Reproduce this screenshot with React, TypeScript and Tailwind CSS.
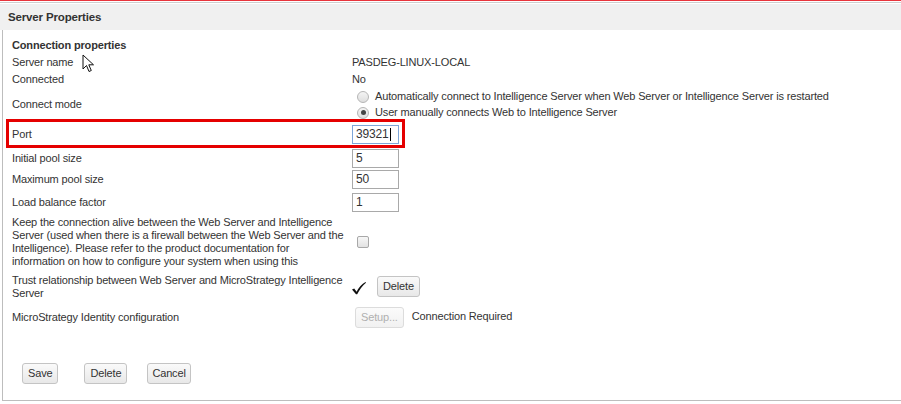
import React from "react";

const font = { fontFamily: '"Liberation Sans", Arial, sans-serif' };

function Btn(props: { label: string; disabled?: boolean; className?: string }) {
    return (
        <button
            className={
                "h-[21px] rounded-[3px] border text-[11px] leading-none bg-gradient-to-b " +
                (props.disabled ? "border-[#dcdcdc] text-[#b0b0b0] from-[#fbfbfb] to-[#f1f1f1]" : "border-[#c4c4c4] text-[#333] from-[#fafafa] to-[#e8e8e8]") +
                " " + (props.className ?? "px-[5px]")
            }
        >
            {props.label}
        </button>
    );
}

function TextInput(props: { value: string; focused?: boolean }) {
    return (
        <div
            className={
                "w-[47px] h-[19px] border bg-white flex items-center px-[3px] text-[12px] text-[#333] " +
                (props.focused ? "border-[#7ea6d8]" : "border-[#a9a9a9]")
            }
        >
            {props.value}
            {props.focused && <span className="w-px h-[13px] bg-black ml-px" />}
        </div>
    );
}

function Radio(props: { checked?: boolean }) {
    return (
        <span className="w-[12px] h-[12px] rounded-full border border-[#b5b5b5] bg-gradient-to-b from-[#f4f4f4] to-[#dedede] flex items-center justify-center shrink-0">
            {props.checked && <span className="w-[5px] h-[5px] rounded-full bg-[#444]" />}
        </span>
    );
}

function Row(props: { label: React.ReactNode; h: string; children?: React.ReactNode }) {
    return (
        <div className={"flex items-center " + props.h}>
            <div className="w-[340px] shrink-0">{props.label}</div>
            <div className="flex items-center">{props.children}</div>
        </div>
    );
}

export default function App() {
    return (
        <div
            className="w-[901px] h-[404px] bg-white text-[11px] leading-[13px] tracking-[-0.15px] text-[#333] relative overflow-hidden"
            style={font}
        >
            <div className="h-px bg-[#e8343c]" />
            <div className="h-px bg-white" />
            <div className="h-px bg-[#cfcfcf]" />
            <div className="h-px bg-white" />
            <div className="h-[26px] bg-[#f0f0f0] flex items-center pl-[8px] pt-px font-bold text-[11.5px]">
                Server Properties
            </div>
            <div className="ml-[2px] h-[371px] border-l border-b border-[#bdbdbd] pl-[9px] pt-[6px]">
                <div className="h-[18px] flex items-center font-bold">Connection properties</div>
                <Row label="Server name" h="h-[17px]">PASDEG-LINUX-LOCAL</Row>
                <Row label="Connected" h="h-[17px]">No</Row>
                <Row label="Connect mode" h="h-[33px]">
                    <div className="flex flex-col gap-[3px] pl-[5px]">
                        <div className="flex items-center gap-[6px]">
                            <Radio />
                            <span>Automatically connect to Intelligence Server when Web Server or Intelligence Server is restarted</span>
                        </div>
                        <div className="flex items-center gap-[6px]">
                            <Radio checked />
                            <span>User manually connects Web to Intelligence Server</span>
                        </div>
                    </div>
                </Row>
                <div className="relative">
                    <Row label="Port" h="h-[27px]">
                        <TextInput value="39321" focused />
                    </Row>
                    <div className="absolute left-[-6px] top-[-2px] w-[399px] h-[29px] border-[3px] border-[#e50000]" />
                </div>
                <Row label="Initial pool size" h="h-[20px]">
                    <TextInput value="5" />
                </Row>
                <Row label="Maximum pool size" h="h-[23px]">
                    <TextInput value="50" />
                </Row>
                <Row label="Load balance factor" h="h-[23px]">
                    <TextInput value="1" />
                </Row>
                <Row
                    h="h-[55px]"
                    label={
                        <>
                            Keep the connection alive between the Web Server and Intelligence<br />
                            Server (used when there is a firewall between the Web Server and the<br />
                            Intelligence). Please refer to the product documentation for<br />
                            information on how to configure your system when using this
                        </>
                    }
                >
                    <span className="ml-[5px] w-[12px] h-[12px] rounded-[2px] border border-[#a8a8a8] bg-gradient-to-b from-[#f7f7f7] to-[#e2e2e2]" />
                </Row>
                <Row label="Trust relationship between Web Server and MicroStrategy Intelligence Server" h="h-[35px]">
                    <svg width="16" height="14" viewBox="0 0 16 14" className="ml-[-1px] mt-[2px]">
                        <path d="M1 8.5 L3.2 7.4 L5.6 10.8 Q9 4 14.5 1 L15 1.7 Q10.2 5.6 6.2 13.2 L5 13.2 Z" fill="#111" />
                    </svg>
                    <Btn label="Delete" className="ml-[10px] px-[5px]" />
                </Row>
                <Row label="MicroStrategy Identity configuration" h="h-[26px]">
                    <Btn label="Setup..." disabled className="ml-[3px] px-[5px]" />
                    <span className="ml-[8px] -mt-[2px]">Connection Required</span>
                </Row>
                <div className="flex items-center pl-[10px] mt-[33px]">
                    <Btn label="Save" />
                    <Btn label="Delete" className="ml-[26px] px-[5px]" />
                    <Btn label="Cancel" className="ml-[20px] px-[4px]" />
                </div>
            </div>
            <svg width="14" height="20" viewBox="0 0 14 20" className="absolute left-[82px] top-[54px]">
                <path d="M1 1 L1 15 L4.5 11.5 L7 17.5 L9.3 16.5 L6.8 10.8 L11.5 10.8 Z" fill="white" stroke="#111" strokeWidth="1" strokeLinejoin="round" />
            </svg>
        </div>
    );
}
